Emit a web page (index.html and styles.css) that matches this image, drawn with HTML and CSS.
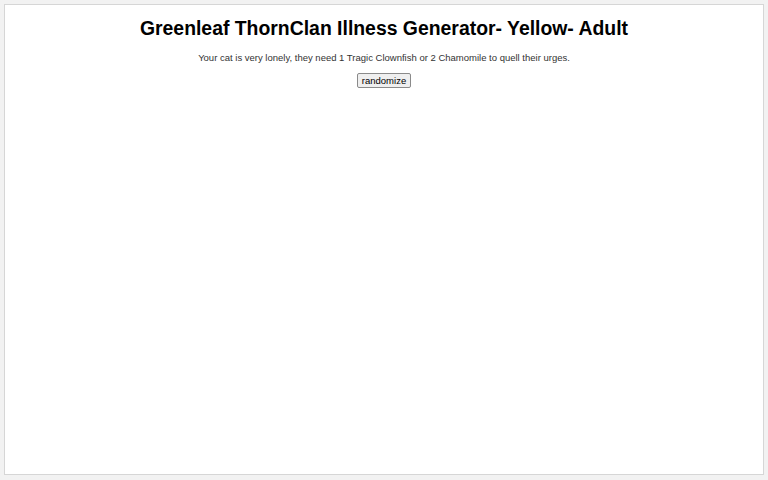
FILE: index.html
```html
<!DOCTYPE html>
<html lang="en">
<head>
    <meta charset="UTF-8">
    <title>Greenleaf ThornClan Illness Generator</title>
    <link rel="stylesheet" href="styles.css">
</head>
<body>
    <div class="container">
        <h1>Greenleaf ThornClan Illness Generator- Yellow- Adult</h1>
        <p id="result">Your cat is very lonely, they need 1 Tragic Clownfish or 2 Chamomile to quell their urges.</p>
        <button class="randomize">randomize</button>
    </div>
</body>
</html>
```

FILE: styles.css
```css
html, body {
    height: 100%;
}
body {
    margin: 0;
    padding: 4px;
    box-sizing: border-box;
    background-color: #f2f2f2;
    font-family: "Liberation Sans", Arial, sans-serif;
}
.container {
    box-sizing: border-box;
    height: 471px;
    background: white;
    border: 1px solid #d6d6d6;
    text-align: center;
    padding-top: 12px;
}
h1 {
    margin: 0;
    font-size: 19.4px;
    color: #000;
}
#result {
    font-size: 9.5px;
    color: #333;
    margin: 12px 0 7px;
}
.randomize {
    font-family: "Liberation Sans", Arial, sans-serif;
    font-size: 9.5px;
    padding: 1px 4px;
    background: #efefef;
    border: 1px solid #8a8a8a;
    border-radius: 2px;
    color: #000;
}
```
